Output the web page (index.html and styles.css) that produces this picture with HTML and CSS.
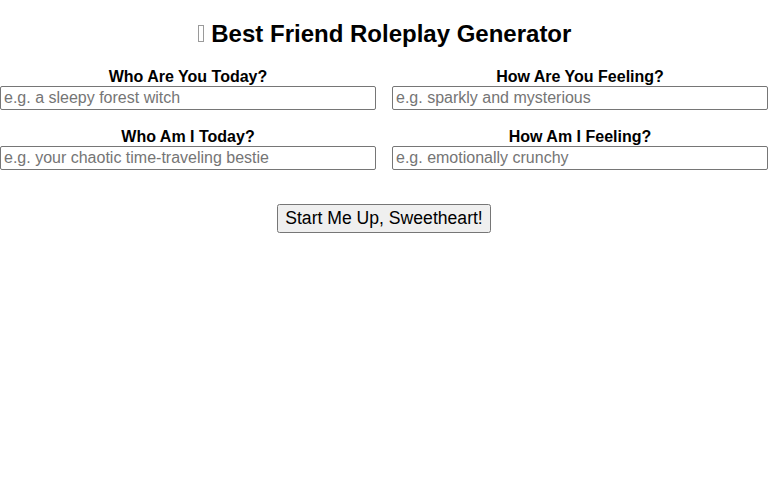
FILE: index.html
```html
<!DOCTYPE html>
<html lang="en">
<head>
    <meta charset="UTF-8">
    <meta name="viewport" content="width=device-width, initial-scale=1.0">
    <title>Best Friend Roleplay Generator</title>
    <link rel="stylesheet" href="styles.css">
</head>
<body>
    <h1><span class="missing-glyph"></span> Best Friend Roleplay Generator</h1>

    <div class="fields">
        <div class="field">
            <label for="you-who">Who Are You Today?</label>
            <input id="you-who" type="text" placeholder="e.g. a sleepy forest witch">
        </div>
        <div class="field">
            <label for="you-feel">How Are You Feeling?</label>
            <input id="you-feel" type="text" placeholder="e.g. sparkly and mysterious">
        </div>
        <div class="field">
            <label for="me-who">Who Am I Today?</label>
            <input id="me-who" type="text" placeholder="e.g. your chaotic time-traveling bestie">
        </div>
        <div class="field">
            <label for="me-feel">How Am I Feeling?</label>
            <input id="me-feel" type="text" placeholder="e.g. emotionally crunchy">
        </div>
    </div>

    <div class="actions">
        <button class="start-button">Start Me Up, Sweetheart!</button>
    </div>
</body>
</html>
```

FILE: styles.css
```css
body {
    font-family: "Liberation Sans", Arial, sans-serif;
    margin: 0;
    padding: 0;
    color: #000;
    background: #fff;
}
h1 {
    text-align: center;
    font-size: 24px;
    margin: 20px 0 20px 0;
}
/* the emoji in the title shows as an empty box */
.missing-glyph {
    display: inline-block;
    width: 4px;
    height: 15px;
    margin: 0 1px;
    border: 1px solid #9a9a9a;
    vertical-align: baseline;
}
.fields {
    display: grid;
    grid-template-columns: 1fr 1fr;
    column-gap: 16px;
    row-gap: 18px;
}
.field label {
    display: block;
    text-align: center;
    font-weight: bold;
    font-size: 16px;
}
.field input {
    display: block;
    width: 100%;
    box-sizing: border-box;
    font-family: "Liberation Sans", Arial, sans-serif;
    font-size: 16px;
    padding: 2px 3px;
    border: 1px solid #767676;
    border-radius: 2px;
}
.actions {
    text-align: center;
    margin-top: 34px;
}
.start-button {
    font-family: "Liberation Sans", Arial, sans-serif;
    font-size: 17.6px;
    padding: 2px 6px;
}
```
